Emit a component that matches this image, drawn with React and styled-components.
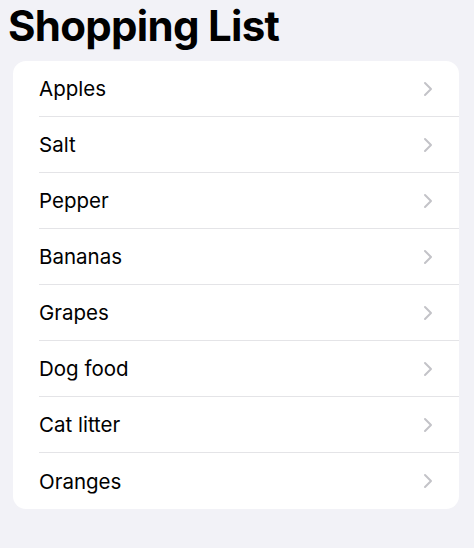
import React from 'react';
import styled, { createGlobalStyle } from 'styled-components';

const GlobalStyle = createGlobalStyle`
  html, body {
    margin: 0;
    padding: 0;
    background: #f2f2f7;
  }
  body {
    font-family: Inter, "Liberation Sans", sans-serif;
    -webkit-font-smoothing: antialiased;
  }
`;

const Page = styled.div`
  min-height: 548px;
  padding: 0 15px 40px 13px;
  box-sizing: border-box;
`;

const Title = styled.h1`
  margin: 0 0 0 -5px;
  padding-top: 1px;
  font-size: 42px;
  font-weight: 700;
  letter-spacing: -0.7px;
  line-height: 50px;
  height: 50px;
  color: #000;
`;

const Card = styled.ul`
  list-style: none;
  margin: 10px 0 0 0;
  padding: 0;
  background: #fff;
  border-radius: 13px;
  overflow: hidden;
`;

const Row = styled.li`
  display: flex;
  align-items: center;
  height: 56px;
  padding-left: 26px;
`;

const RowInner = styled.div`
  flex: 1;
  display: flex;
  align-items: center;
  justify-content: space-between;
  height: 100%;
  padding-right: 26px;
  box-sizing: border-box;
  border-bottom: ${(p) => (p.$last ? 'none' : '1px solid #e4e4e7')};
`;

const Label = styled.span`
  font-size: 20.5px;
  color: #000;
  letter-spacing: 0;
`;

const Chevron = () => (
  <svg width="10" height="16" viewBox="0 0 10 16" fill="none">
    <path d="M2 2l6 6-6 6" stroke="#c3c3c8" strokeWidth="2" strokeLinecap="round" strokeLinejoin="round" />
  </svg>
);

const items = ['Apples', 'Salt', 'Pepper', 'Bananas', 'Grapes', 'Dog food', 'Cat litter', 'Oranges'];

export default function App() {
  return (
    <>
      <GlobalStyle />
      <Page>
        <Title>Shopping List</Title>
        <Card>
          {items.map((item, i) => (
            <Row key={item}>
              <RowInner $last={i === items.length - 1}>
                <Label>{item}</Label>
                <Chevron />
              </RowInner>
            </Row>
          ))}
        </Card>
      </Page>
    </>
  );
}
